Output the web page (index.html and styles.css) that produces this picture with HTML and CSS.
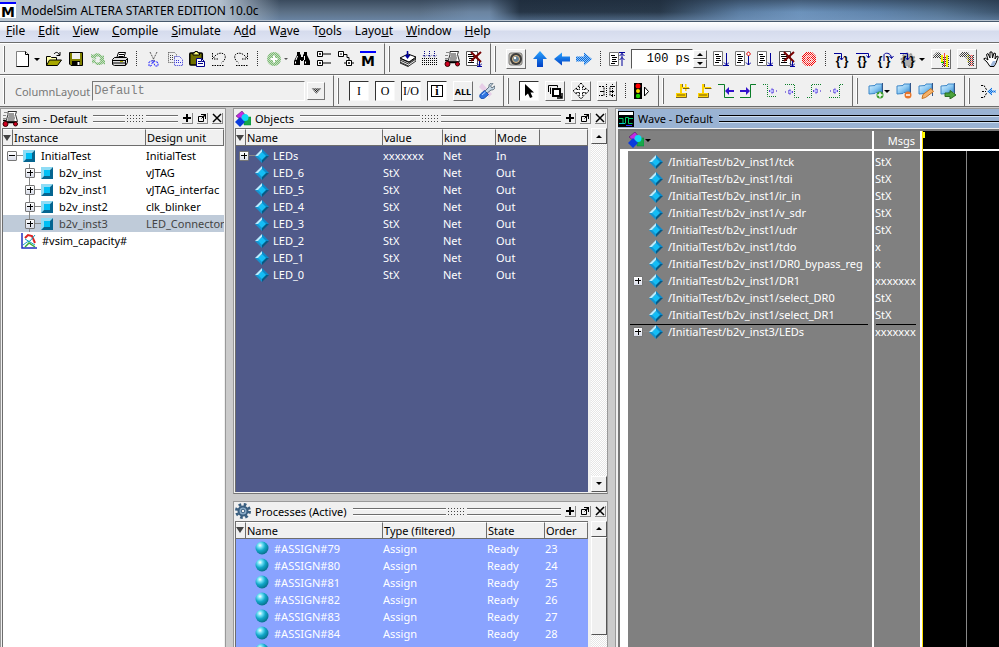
FILE: index.html
```html
<!DOCTYPE html>
<html lang="en">
<head>
<meta charset="utf-8">
<title>ModelSim ALTERA STARTER EDITION 10.0c</title>
<link rel="stylesheet" href="styles.css">
</head>
<body>
<svg class="sprite" aria-hidden="true">
<defs>
<pattern id="dither" width="2" height="2" patternUnits="userSpaceOnUse"><path d="M0 0h1v1h-1zM1 1h1v1h-1z" fill="#000"/></pattern>
<pattern id="dither-red" width="2" height="2" patternUnits="userSpaceOnUse"><path d="M0 0h1v1h-1zM1 1h1v1h-1z" fill="#f00"/></pattern>
<pattern id="dither-blue" width="2" height="2" patternUnits="userSpaceOnUse"><rect width="2" height="2" fill="#8fc4f4"/><path d="M0 0h1v1h-1zM1 1h1v1h-1z" fill="#0a6be0"/></pattern>
<pattern id="dither-green" width="2" height="2" patternUnits="userSpaceOnUse"><rect width="2" height="2" fill="#c4dfbf"/><path d="M0 0h1v1h-1zM1 1h1v1h-1z" fill="#7ab873"/></pattern>
<linearGradient id="arrow" x1="0" y1="0" x2="0" y2="1"><stop offset="0" stop-color="#29a3ff"/><stop offset="1" stop-color="#003fc4"/></linearGradient>
<linearGradient id="flag" x1="0" y1="0" x2="1" y2="1"><stop offset="0" stop-color="#e2f5ff"/><stop offset=".5" stop-color="#8cc9f3"/><stop offset="1" stop-color="#2f7fc4"/></linearGradient>
<radialGradient id="ball" cx=".35" cy=".3" r=".75"><stop offset="0" stop-color="#fff"/><stop offset=".25" stop-color="#6fe0f5"/><stop offset=".55" stop-color="#12a6c8"/><stop offset="1" stop-color="#066c86"/></radialGradient>
</defs>
<symbol id="new" viewBox="0 0 16 16"><path d="M1.500.5h9l3 3v12h-12z" fill="#fff" stroke="#808080"/><path d="M10.500.5v3h3M13.500 3v12.500h-12" fill="none" stroke="#000"/></symbol>
<symbol id="open" viewBox="0 0 16 16"><path d="M.5 14.500v-9h4l1 1h5v3" fill="#ffffa8" stroke="#000"/><path d="M.5 14.500l3-5.500h12l-4 5.500z" fill="#a8a800" stroke="#000"/><path d="M8 3c2-2.500 4-2 5.500 1M14 1v3.500h-3.500" fill="none" stroke="#000"/></symbol>
<symbol id="save" viewBox="0 0 16 16"><path d="M1.500 1.500h13v13H3l-1.500-1.500z" fill="#808000" stroke="#000"/><path d="M4 2h8v6H4z" fill="#f0f0f0"/><path d="M4 10h8v5H4z" fill="#000"/><path d="M9.500 11h2v3h-2z" fill="#fff"/></symbol>
<symbol id="refresh" viewBox="0 0 16 16"><path d="M1 7V3l2 1c3-3 7-2 9 1l2-1v5H9l1.500-2C9 5 7 5 5.500 6.500L7 8zM15 9v5l-2-1.500c-3 2.500-7 2-9-1L2 12.500V8.500h4L5 10c1.500 2 4 2 5.500.5L9.500 9z" fill="url(#dither-green)"/></symbol>
<symbol id="print" viewBox="0 0 16 16"><path d="M4.500 7.500l2-6h7l-2 6z" fill="#fff" stroke="#000"/><path d="M7 3.500h5M6.500 5.500h5" stroke="#000"/><path d="M.5 8.500l2-2h12l1 1v4l-2 3h-11l-2-1z" fill="#ddd" stroke="#000"/><path d="M1 9.500h12.500l2-2M13.500 9v5M1 12h12" stroke="#000" fill="none"/><path d="M8 10.500h3" stroke="#aa0"/></symbol>
<symbol id="cut" viewBox="0 0 16 16"><path d="M5 1l4.500 9M12 1L7.500 10" stroke="#555" stroke-dasharray="2 1" fill="none"/><path d="M7.500 9.500L4 11v4h2l2-5 2 5h3v-3.500z" stroke="#22f" stroke-dasharray="2 1" fill="none"/></symbol>
<symbol id="copy" viewBox="0 0 16 16"><path d="M1.500 1.500h6l2 2v8h-8zM3 4.500h4M3 6.500h5M3 8.500h4" stroke="#444" stroke-dasharray="1 1" fill="none"/><path d="M7.500 5.500h5l3 3v6h-8zM9 9.500h4M9 11.500h5" stroke="#33c" stroke-dasharray="1 1" fill="#eef"/></symbol>
<symbol id="paste" viewBox="0 0 16 16"><rect x=".8" y="2" width="12.500" height="12" rx="1" fill="#707000" stroke="#000" stroke-width="1.500"/><path d="M4 4V2h1.500L6 .5h2.500L9 2h1.500v2z" fill="#ffff80" stroke="#000"/><path d="M7.500 7.500h5l3 3v5h-8z" fill="#fff" stroke="#00008a"/><path d="M9 10.500h3M9 12.500h5M12.500 8v2.500h3" stroke="#00008a" fill="none"/></symbol>
<symbol id="undo" viewBox="0 0 16 16"><path d="M1.500 2v6h6M2.500 7c3-5 8-6 11-3.500 2 3 0 6-3 8.500M1 14.500h12" fill="none" stroke="#000" stroke-dasharray="1.500 1"/></symbol>
<symbol id="redo" viewBox="0 0 16 16"><path d="M14.500 2v6h-6M13.500 7c-3-5-8-6-11-3.500-2 3 0 6 3 8.500M3 14.500h12" fill="none" stroke="#000" stroke-dasharray="1.500 1"/></symbol>
<symbol id="add" viewBox="0 0 16 16"><circle cx="8" cy="8" r="7" fill="url(#dither-green)"/><path d="M8 4.500v7M4.500 8h7" stroke="#fff" stroke-width="2"/></symbol>
<symbol id="find" viewBox="0 0 16 16"><path d="M3 1h3v2l1 1v2h2V4l1-1V1h3v3l3 6v4h-6V9H9v1H7V9H6v5H0v-4l3-6z" fill="#000"/><path d="M3.500 5L2 9M10.500 5v4M1.500 10.500v2M11.500 10.500v2" stroke="#fff"/></symbol>
<symbol id="tree" viewBox="0 0 16 16"><path d="M1.500.5h5v5h-5zM1.500 9.500h5v5h-5z" fill="#fff" stroke="#000"/><path d="M3 3h2M4 2v2M3 12h2M4 11v2M7 3h8M7 12h8" stroke="#000"/></symbol>
<symbol id="hier" viewBox="0 0 16 16"><path d="M.5.5h5v5h-5zM8.500 9.500h5v5h-5z" fill="#fff" stroke="#000"/><path d="M2 3h2M10 12h2M11 11v2M6 3.500h3v3h2v3M14 12h2M6 12h2.500" stroke="#000" fill="none"/></symbol>
<symbol id="compile" viewBox="0 0 16 16"><path d="M0 7l8-4 8 3-7 5z" fill="#fff" stroke="#000"/><path d="M0 7v5l8 3.500 8-5.500V6M0 9l8.500 4L16 8M1 8l8 3.500 7-4.500M0 11l8.500 4" stroke="#000" stroke-width=".8" fill="none"/><path d="M7.500 0v6" stroke="#009" stroke-width="1.500"/><path d="M4.500 4h6l-3 4z" fill="#009"/></symbol>
<symbol id="compile-all" viewBox="0 0 16 16"><path d="M0 7.500h16M0 9.500h16M0 11.500h16M0 13.500h16" stroke="#000" stroke-dasharray="1 1"/><path d="M1 4l1.500 2L5 4M6 4l1.500 2L10 4M11 4l1.500 2L15 4M2.500 0v6M7.500 0v6M12.500 0v6" stroke="#118" stroke-dasharray="1 1" fill="none"/></symbol>
<symbol id="sim" viewBox="0 0 16 16"><path d="M6 .5h8.500l-1 3 2 7H4l2-7zM7 3h5M6.500 5h6M6 7h7M5.500 9h7" fill="#fff" stroke="#000" stroke-width=".8"/><path d="M2 1.500h3M1 4.500h3M1 7.500h3" stroke="#888"/><path d="M1 9.500h2l2 2h9" stroke="#000" fill="none" stroke-width="1.500"/><circle cx="3.500" cy="13" r="2.500" fill="#d00020" stroke="#300"/><circle cx="13.500" cy="13" r="2" fill="#d00020" stroke="#300"/></symbol>
<symbol id="break" viewBox="0 0 16 16"><path d="M.5.500h11v14h-11z" fill="#fff" stroke="#555"/><path d="M2 3.500h4M2 5.500h6M3 7.500h6M3 9.500h5M2 11.500h6" stroke="#000"/><path d="M5 1l10 10M15 1L5 10" stroke="#700" stroke-width="2"/><path d="M13.500 10v5M11 12.500l2.500 2.500 2.500-2.500M11 15.500h5" stroke="#009" fill="none"/></symbol>
<symbol id="camera" viewBox="0 0 16 16"><rect x="1" y="2" width="13" height="12" rx="2" fill="#c9c4b8" stroke="#777"/><circle cx="8" cy="8" r="6" fill="#3c3c3c"/><circle cx="8" cy="8" r="3.500" fill="#5f7f98" stroke="#e0b880"/><circle cx="7" cy="7" r="1.200" fill="#fff"/></symbol>
<symbol id="up" viewBox="0 0 16 16"><path d="M8 0l7 8h-4v8H5V8H1z" fill="url(#arrow)"/></symbol>
<symbol id="left" viewBox="0 0 16 16"><path d="M0 8l8-6.500v4h8v5H8v4z" fill="url(#arrow)"/></symbol>
<symbol id="right" viewBox="0 0 16 16"><path d="M16 8L8 1.500v4H0v5h8v4z" fill="url(#dither-blue)"/></symbol>
<symbol id="restart" viewBox="0 0 16 16"><path d="M.5 1.500h9v13h-9z" fill="#fff" stroke="#777"/><path d="M2 4.500h4M3 6.500h5M3 8.500h4M3 10.500h5M2 12.500h4" stroke="#000"/><path d="M10 1.500h6M13 2v13M10.500 5L13 2.500 15.500 5M10.500 9L13 6.500 15.500 9" stroke="#009" fill="none"/></symbol>
<symbol id="run" viewBox="0 0 16 16"><path d="M.5.500h9v14h-9z" fill="#fff" stroke="#777"/><path d="M2 3.500h4M3 5.500h5M3 7.500h4M3 9.500h5M2 11.500h4" stroke="#000"/><path d="M13.500 2v12M11 11.500l2.500 2.500 2.500-2.500M10 14.500h6" stroke="#009" fill="none"/></symbol>
<symbol id="run-cont" viewBox="0 0 16 16"><path d="M.5.500h9v14h-9z" fill="#fff" stroke="#777"/><path d="M2 3.500h4M3 5.500h5M3 7.500h4M3 9.500h5M2 11.500h4" stroke="#000"/><path d="M13.500 5v9M11 11.500l2.500 2.500 2.500-2.500" stroke="#009" fill="none"/><path d="M13.500.7L15.500 3l-2 2-2-2z" fill="#fff" stroke="#d00"/></symbol>
<symbol id="stop" viewBox="0 0 16 16"><path d="M5 1h6l4 4v6l-4 4H5l-4-4V5z" fill="url(#dither-red)"/><path d="M11 5H5v6h6V8H8" fill="none" stroke="#fff" opacity=".7"/></symbol>
<symbol id="step-in" viewBox="0 0 16 16"><path d="M0 2.500h7.500v6M5.500 6.500l2 2.500 2-2.500" stroke="#009" fill="none"/></symbol>
<symbol id="step-over" viewBox="0 0 16 16"><path d="M0 2.500h12.500v4M10.500 4.500l2 2.500 2-2.500" stroke="#009" fill="none"/></symbol>
<symbol id="step-out" viewBox="0 0 16 16"><path d="M6 10V4c0-2.500 7-3 7.500 3M11.500 5l2 2.500 2-2.500" stroke="#009" fill="none"/></symbol>
<symbol id="profile" viewBox="0 0 16 16"><path d="M0 5l4-4 4 1v3h8v11h-7V9L6 7H0z" fill="url(#dither)" opacity=".75"/><path d="M9 4v8M14 4v12" stroke="#ee0" stroke-width="2"/><path d="M11.500 2v13" stroke="#f44"/><path d="M8 11.500h3" stroke="#0c0"/></symbol>
<symbol id="mem" viewBox="0 0 16 16"><path d="M0 5l3-4h6l2 3h4v11H9V9L6 6H0z" fill="url(#dither)" opacity=".75"/><path d="M9 4v8" stroke="#dd0" stroke-dasharray="1 1"/><path d="M12.500 4v11" stroke="#f55" stroke-width="2" stroke-dasharray="1 1"/></symbol>
<symbol id="hand" viewBox="0 0 16 16"><path d="M4 11L.7 8l1.500-1L5 9 3.500 3.500 5 2.500 7 7V1h2l.5 6L11 2l1.500.5L12 8l2-3 1.300.7L13 12l-2 3.500H7z" fill="#fff" stroke="#000"/><path d="M10 10h3l-2 5H7z" fill="#9fb8dc"/></symbol>
<symbol id="wrench" viewBox="0 0 16 16"><path d="M3 0l10 11-3 3L0 4z" fill="#e3bfe3" opacity=".7"/><path d="M5 9l5-5c-.5-3 2-4.500 4-3.500L11.500 3 13 5l2.500-2c1 3-1 4-3.500 4l-5 4z" fill="#c5d8e5" stroke="#456" stroke-width=".8"/><path d="M5.500 7.500l4 4-4 3.500c-3.500 2-6-1-4-4z" fill="#2f73e0" stroke="#1850b0"/><path d="M3 12l3.500-3" stroke="#bfe0ff"/></symbol>
<symbol id="cursor" viewBox="0 0 16 16"><path d="M4 1v12l3-2.500L9 15l2.500-1-2-4.500H13z" fill="#000"/></symbol>
<symbol id="zoom-area" viewBox="0 0 16 16"><path d="M1.500 9V2.500h9v2M3.500 11V4.500" stroke="#000" fill="none"/><path d="M6 6h7v7H6z" fill="#fff" stroke="#000" stroke-width="2"/><path d="M15 10v5h-5M12 12l3 3" stroke="#000" fill="none" stroke-width="1.500"/></symbol>
<symbol id="pan" viewBox="0 0 16 16"><path d="M8 0l3 3.500H9.500v3h3V5L16 8l-3.500 3V9.500h-3v3H11L8 16l-3-3.500h1.500v-3h-3V11L0 8l3.500-3v1.500h3v-3H5z" fill="#fff" stroke="#000" stroke-dasharray="1.500 .6"/></symbol>
<symbol id="edit-wave" viewBox="0 0 16 16"><path d="M0 3.500h5v9H0M16 3.500h-5v9h5" stroke="#000" fill="none" stroke-dasharray="2 1"/><path d="M7.500 1v14M13.500 1v14" stroke="#000" stroke-dasharray="1 1"/><path d="M1 8.500h4M11 8.500h4" stroke="#000"/></symbol>
<symbol id="traffic" viewBox="0 0 16 16"><path d="M0 0h8v16H0z" fill="#000"/><circle cx="4" cy="3" r="2.500" fill="#f00"/><circle cx="4" cy="8" r="2" fill="#ffd800"/><circle cx="4" cy="13" r="2.200" fill="#1ed000"/><path d="M10.500 4v9l4-4.500z" fill="#fff" stroke="#000"/></symbol>
<symbol id="ins-cursor" viewBox="0 0 16 16"><path d="M6 1h2v9h4v4H2v-4h4zM8 4h7v1.500H8zM11 1h1.500v7H11z" fill="#ffd400"/><path d="M2 14.500h10.500V10M3 12h8M8.500 1v3M9 5.500h6.500" fill="none" stroke="#554000" stroke-width=".8"/></symbol>
<symbol id="del-cursor" viewBox="0 0 16 16"><path d="M6 1h2v9h4v4H2v-4h4zM8 4h7v1.500H8z" fill="#ffd400"/><path d="M2 14.500h10.500V10M3 12h8M8.500 1v3M9 5.500h6.500" fill="none" stroke="#554000" stroke-width=".8"/></symbol>
<symbol id="prev-edge" viewBox="0 0 16 16"><path d="M0 1.500h6.500v13H16" stroke="#0a7d28" fill="none"/><path d="M7 8l4-4v3h5v2h-5v3z" fill="#31c"/></symbol>
<symbol id="next-edge" viewBox="0 0 16 16"><path d="M16 1.500h-5.500v13H0" stroke="#0a7d28" fill="none"/><path d="M10 8L6 4v3H0v2h6v3z" fill="#31c"/></symbol>
<symbol id="edge1" viewBox="0 0 16 16"><path d="M1 1.500h4.500v12H15" stroke="#0a7d28" stroke-dasharray="1 1" fill="none"/><path d="M7 8l4-3v6zM11 8h4" fill="#bbf" stroke="#31c" stroke-dasharray="1 2"/></symbol>
<symbol id="edge2" viewBox="0 0 16 16"><path d="M1 1.500h9.500v13H15" stroke="#0a7d28" stroke-dasharray="1 1" fill="none"/><path d="M9 9L5 6v6zM1 9h4" fill="#bbf" stroke="#31c" stroke-dasharray="1 2"/></symbol>
<symbol id="edge3" viewBox="0 0 16 16"><path d="M15 1.500H5.500v13H1" stroke="#0a7d28" stroke-dasharray="1 1" fill="none"/><path d="M7 8l4-3v6zM11 8h4" fill="#bbf" stroke="#31c" stroke-dasharray="1 2"/></symbol>
<symbol id="edge4" viewBox="0 0 16 16"><path d="M15 1.500h-3.500v13H1" stroke="#0a7d28" stroke-dasharray="1 1" fill="none"/><path d="M10 8L6 5v6zM2 8h4" fill="#bbf" stroke="#31c" stroke-dasharray="1 2"/></symbol>
<symbol id="flag-base" viewBox="0 0 16 16"><path d="M1 3l6-.5 1-1.500h6v8l-6 .5-1 1-6 .5z" fill="url(#flag)" stroke="#3a86c8"/><path d="M14.500 0v13" stroke="#358"/></symbol>
<symbol id="bm-add" viewBox="0 0 16 16"><use href="#flag-base"/><circle cx="12" cy="12" r="3.500" fill="#3a9c2a"/><path d="M12 9.500v5M9.500 12h5" stroke="#fff" stroke-width="1.500"/></symbol>
<symbol id="bm-del" viewBox="0 0 16 16"><use href="#flag-base"/><circle cx="12" cy="12" r="3.500" fill="#e8762c"/><path d="M10 12h4" stroke="#fff" stroke-width="1.500"/></symbol>
<symbol id="bm-edit" viewBox="0 0 16 16"><use href="#flag-base"/><path d="M4 15.500l1-4 8-6 2.500 3-8 6z" fill="#f5b26a" stroke="#c87420"/></symbol>
<symbol id="bm-go" viewBox="0 0 16 16"><use href="#flag-base"/><path d="M5 10h5V7.500l6 4.500-6 4v-2.500H5z" fill="#4ba33c" stroke="#2d6f22"/></symbol>
<symbol id="merge" viewBox="0 0 16 16"><path d="M1 2.500h3l3 5M1 14.500h3l3-5M2 8.500h4" stroke="#000" stroke-dasharray="2 1" fill="none"/><path d="M7 8.500l5-4v3h4v2h-4v3z" fill="url(#dither-blue)"/></symbol>
<symbol id="plus" viewBox="0 0 10 10"><path d="M5 1v8M1 5h8" stroke="#000" stroke-width="2"/></symbol>
<symbol id="undock" viewBox="0 0 10 10"><path d="M1.500 3.500h5v5h-5zM4 1.500h4.500V6M4.500 5.500L8 2" stroke="#000" fill="none"/><path d="M5 1h4v4z"/></symbol>
<symbol id="close" viewBox="0 0 10 10"><path d="M1 1l8 8M9 1L1 9" stroke="#000" stroke-width="1.500"/></symbol>
<symbol id="block" viewBox="0 0 12 12"><path d="M0 0h12L9 3v6H3v0L0 12z" fill="#8fdcf5"/><path d="M12 0v12H0l3-3h6V3z" fill="#056590"/><path d="M3 3h6v6H3z" fill="#00bff5"/></symbol>
<symbol id="diamond" viewBox="0 0 14 14"><path d="M7 0L0 7l3 .5L7 3z" fill="#b8ecff"/><path d="M7 0l7 7-4 .5L7 3z" fill="#0a8acb"/><path d="M0 7l7 7v-4L3.500 7z" fill="#1594d0"/><path d="M14 7l-7 7v-4l3.500-3z" fill="#065a85"/><path d="M7 3l4 4-4 4-4-4z" fill="#14bdf5"/></symbol>
<symbol id="sphere" viewBox="0 0 14 14"><circle cx="7" cy="7" r="6.500" fill="url(#ball)"/></symbol>
<symbol id="shapes" viewBox="0 0 16 16"><path d="M1 5l6-5 4 5-5 4z" fill="#c32be0" stroke="#3c0a50" stroke-width=".5"/><path d="M9 6h7v8H9z" fill="#17a84a" stroke="#083" stroke-width=".5"/><circle cx="10" cy="6.500" r="3.500" fill="#10d8f5"/><path d="M0 11l5-5 5 5-5 5z" fill="#0a3cdc"/></symbol>
<symbol id="gear" viewBox="0 0 16 16"><circle cx="8" cy="8" r="6.500" fill="none" stroke="#3a5f80" stroke-width="3" stroke-dasharray="2.600 2.500"/><circle cx="8" cy="8" r="4.500" fill="#8fb0cc" stroke="#3a5f80" stroke-width="2"/><circle cx="8" cy="8" r="1.800" fill="#f0f0f0" stroke="#3a5f80"/></symbol>
<symbol id="capacity" viewBox="0 0 16 16"><path d="M1 0v15h15" stroke="#2030c0" stroke-width="1.500" fill="none"/><path d="M4 5l3-3 4 1 3 7" stroke="#d22" stroke-width="2" fill="none"/><path d="M2 12l4-3 3-1 5-6M4 6l10 6" stroke="#14a0c0" fill="none"/><path d="M4 14l4-4 6 4" stroke="#3aaa3a" stroke-width="1.500" fill="none"/></symbol>
<symbol id="wave" viewBox="0 0 16 16"><path d="M0 0h16v16H0z" fill="#000"/><path d="M1 1h14v3H1z" fill="#fff"/><path d="M1 7.500h4v5M7.500 12.500v-6h3v6h4M11 7.500h4" stroke="#0c6" fill="none"/><path d="M1 12.500h6" stroke="#0cc"/><path d="M8 14.500h6" stroke="#33f"/></symbol>
</svg>

<div class="app">
<header class="titlebar"><span class="logo">M</span><h1>ModelSim ALTERA STARTER EDITION 10.0c</h1></header>
<nav class="menubar">
<button><u>F</u>ile</button><button><u>E</u>dit</button><button><u>V</u>iew</button><button><u>C</u>ompile</button><button><u>S</u>imulate</button><button>A<u>d</u>d</button><button>W<u>a</u>ve</button><button>T<u>o</u>ols</button><button>Layo<u>u</u>t</button><button><u>W</u>indow</button><button><u>H</u>elp</button>
</nav>

<div class="toolrow first">
<div class="group">
<button class="tb drop wide" aria-label="New"><svg class="i16"><use href="#new"/></svg></button>
<button class="tb" aria-label="Open"><svg class="i16"><use href="#open"/></svg></button>
<button class="tb" aria-label="Save"><svg class="i16"><use href="#save"/></svg></button>
<button class="tb" aria-label="Reload"><svg class="i16"><use href="#refresh"/></svg></button>
<button class="tb" aria-label="Print"><svg class="i16"><use href="#print"/></svg></button>
<span class="sep"></span>
<button class="tb" aria-label="Cut"><svg class="i16"><use href="#cut"/></svg></button>
<button class="tb" aria-label="Copy"><svg class="i16"><use href="#copy"/></svg></button>
<button class="tb" aria-label="Paste"><svg class="i16"><use href="#paste"/></svg></button>
<button class="tb" aria-label="Undo"><svg class="i16"><use href="#undo"/></svg></button>
<button class="tb" aria-label="Redo"><svg class="i16"><use href="#redo"/></svg></button>
<span class="sep"></span>
<button class="tb drop faint" aria-label="Add selected"><svg class="i16"><use href="#add"/></svg></button>
<button class="tb" aria-label="Find"><svg class="i16"><use href="#find"/></svg></button>
<button class="tb" aria-label="Collapse all"><svg class="i16"><use href="#tree"/></svg></button>
<button class="tb" aria-label="Expand hierarchy"><svg class="i16"><use href="#hier"/></svg></button>
<button class="tb" aria-label="ModelSim"><span class="logo">M</span></button>
</div>
<div class="group">
<button class="tb" aria-label="Compile"><svg class="i16"><use href="#compile"/></svg></button>
<button class="tb" aria-label="Compile all"><svg class="i16"><use href="#compile-all"/></svg></button>
<button class="tb" aria-label="Simulate"><svg class="i16"><use href="#sim"/></svg></button>
<button class="tb" aria-label="Break"><svg class="i16"><use href="#break"/></svg></button>
</div>
<div class="group last">
<button class="tb raised" aria-label="Snapshot"><svg class="i16"><use href="#camera"/></svg></button>
<button class="tb" aria-label="Up"><svg class="i16"><use href="#up"/></svg></button>
<button class="tb" aria-label="Back"><svg class="i16"><use href="#left"/></svg></button>
<button class="tb" aria-label="Forward"><svg class="i16"><use href="#right"/></svg></button>
<span class="sep"></span>
<button class="tb" aria-label="Restart"><svg class="i16"><use href="#restart"/></svg></button>
<div class="spin"><input type="text" value="100 ps" aria-label="Run length"><div class="spin-btns"><button class="su" aria-label="Increase"></button><button class="sd" aria-label="Decrease"></button></div></div>
<button class="tb" aria-label="Run"><svg class="i16"><use href="#run"/></svg></button>
<button class="tb" aria-label="Continue run"><svg class="i16"><use href="#run-cont"/></svg></button>
<button class="tb" aria-label="Run all"><svg class="i16"><use href="#run"/></svg></button>
<button class="tb" aria-label="Break run"><svg class="i16"><use href="#break"/></svg></button>
<button class="tb" aria-label="Stop"><svg class="i16"><use href="#stop"/></svg></button>
<span class="sep"></span>
<button class="tb" aria-label="Step into"><svg class="i16"><text x="8" y="14" class="brace">{ }</text><use href="#step-in"/></svg></button>
<button class="tb" aria-label="Step over"><svg class="i16"><text x="6" y="14" class="brace">{}</text><use href="#step-over"/></svg></button>
<button class="tb" aria-label="Step out"><svg class="i16"><text x="6" y="14" class="brace">{ }</text><use href="#step-out"/></svg></button>
<button class="tb drop wide" aria-label="Step options"><svg class="i16"><circle cx="8" cy="9" r="6.500" fill="#b0b0b0" stroke="#999" stroke-width="2" stroke-dasharray="2 2"/><text x="8" y="14" class="brace">{ }</text><use href="#step-in"/></svg></button>
<button class="tb raised" aria-label="Performance profiling"><svg class="i16"><use href="#profile"/></svg></button>
<button class="tb raised" aria-label="Memory profiling"><svg class="i16"><use href="#mem"/></svg></button>
<button class="tb" aria-label="Edit breakpoints"><svg class="i16"><use href="#hand"/></svg></button>
</div>
</div>

<div class="toolrow">
<div class="group">
<div class="combo"><label for="columns">ColumnLayout</label><select id="columns" disabled><option>Default</option></select><svg class="combo-arrow" viewBox="0 0 18 18" aria-hidden="true"><path d="M4 6h11l-5.500 6z" fill="url(#dither)"/></svg></div>
</div>
<div class="group">
<button class="tb pressed serif">I</button>
<button class="tb pressed serif">O</button>
<button class="tb pressed serif">I/O</button>
<button class="tb pressed serif"><span class="boxed">i</span></button>
<button class="tb raised all">ALL</button>
<button class="tb" aria-label="Configure"><svg class="i16"><use href="#wrench"/></svg></button>
</div>
<div class="group">
<button class="tb pressed" aria-label="Select mode"><svg class="i16"><use href="#cursor"/></svg></button>
<button class="tb raised" aria-label="Zoom mode"><svg class="i16"><use href="#zoom-area"/></svg></button>
<button class="tb raised" aria-label="Pan mode"><svg class="i16"><use href="#pan"/></svg></button>
<button class="tb raised" aria-label="Edit mode"><svg class="i16"><use href="#edit-wave"/></svg></button>
<span class="sep"></span>
<button class="tb" aria-label="Stop drawing"><svg class="i16"><use href="#traffic"/></svg></button>
</div>
<div class="group">
<button class="tb" aria-label="Insert cursor"><svg class="i16"><use href="#ins-cursor"/></svg></button>
<button class="tb" aria-label="Delete cursor"><svg class="i16"><use href="#del-cursor"/></svg></button>
<button class="tb" aria-label="Previous transition"><svg class="i16"><use href="#prev-edge"/></svg></button>
<button class="tb" aria-label="Next transition"><svg class="i16"><use href="#next-edge"/></svg></button>
<button class="tb" aria-label="Previous falling edge"><svg class="i16"><use href="#edge1"/></svg></button>
<button class="tb" aria-label="Next falling edge"><svg class="i16"><use href="#edge2"/></svg></button>
<button class="tb" aria-label="Previous rising edge"><svg class="i16"><use href="#edge3"/></svg></button>
<button class="tb" aria-label="Next rising edge"><svg class="i16"><use href="#edge4"/></svg></button>
</div>
<div class="group">
<button class="tb drop" aria-label="Add bookmark"><svg class="i16"><use href="#bm-add"/></svg></button>
<button class="tb" aria-label="Delete bookmark"><svg class="i16"><use href="#bm-del"/></svg></button>
<button class="tb" aria-label="Edit bookmark"><svg class="i16"><use href="#bm-edit"/></svg></button>
<button class="tb" aria-label="Go to bookmark"><svg class="i16"><use href="#bm-go"/></svg></button>
</div>
<div class="group last">
<button class="tb" aria-label="Merge"><svg class="i16"><use href="#merge"/></svg></button>
</div>
</div>

<main class="workspace">
<section class="pane sim">
<header class="pane-head"><svg class="i16"><use href="#sim"/></svg><h2>sim - Default</h2><span class="rule"></span><span class="dots"></span><span class="rule"></span>
<button class="pb" aria-label="Zoom pane"><svg><use href="#plus"/></svg></button><button class="pb" aria-label="Undock"><svg><use href="#undock"/></svg></button><button class="pb" aria-label="Close"><svg><use href="#close"/></svg></button></header>
<div class="list white">
<table>
<colgroup><col class="c-arrow"><col class="c-instance"><col></colgroup>
<thead><tr><th class="sort"></th><th>Instance</th><th>Design unit</th></tr></thead>
<tbody>
<tr><td colspan="2"><div class="node root"><button class="tog minus" aria-label="Collapse"></button><i class="link"></i><svg class="i12"><use href="#block"/></svg><span>InitialTest</span></div></td><td>InitialTest</td></tr>
<tr><td colspan="2"><div class="node child"><button class="tog" aria-label="Expand"></button><i class="link"></i><svg class="i12"><use href="#block"/></svg><span>b2v_inst</span></div></td><td>vJTAG</td></tr>
<tr><td colspan="2"><div class="node child"><button class="tog" aria-label="Expand"></button><i class="link"></i><svg class="i12"><use href="#block"/></svg><span>b2v_inst1</span></div></td><td>vJTAG_interfac</td></tr>
<tr><td colspan="2"><div class="node child"><button class="tog" aria-label="Expand"></button><i class="link"></i><svg class="i12"><use href="#block"/></svg><span>b2v_inst2</span></div></td><td>clk_blinker</td></tr>
<tr class="selected"><td colspan="2"><div class="node child"><button class="tog" aria-label="Expand"></button><i class="link"></i><svg class="i12"><use href="#block"/></svg><span>b2v_inst3</span></div></td><td>LED_Connector</td></tr>
<tr><td colspan="2"><div class="node leaf"><svg class="i16"><use href="#capacity"/></svg><span>#vsim_capacity#</span></div></td><td></td></tr>
</tbody>
</table>
</div>
</section>

<div class="middle">
<section class="pane objects">
<header class="pane-head"><svg class="i16"><use href="#shapes"/></svg><h2>Objects</h2><span class="rule"></span><span class="dots"></span><span class="rule"></span>
<button class="pb" aria-label="Zoom pane"><svg><use href="#plus"/></svg></button><button class="pb" aria-label="Undock"><svg><use href="#undock"/></svg></button><button class="pb" aria-label="Close"><svg><use href="#close"/></svg></button></header>
<div class="scroller">
<div class="list navy">
<table>
<colgroup><col class="c-arrow"><col class="c-name"><col class="c-value"><col class="c-kind"><col class="c-mode"><col></colgroup>
<thead><tr><th class="sort"></th><th>Name</th><th>value</th><th>kind</th><th>Mode</th><th></th></tr></thead>
<tbody>
<tr><td colspan="2"><div class="node obj"><button class="tog" aria-label="Expand"></button><i class="link"></i><svg class="i14"><use href="#diamond"/></svg><span>LEDs</span></div></td><td>xxxxxxx</td><td>Net</td><td>In</td><td></td></tr>
<tr><td colspan="2"><div class="node sig"><svg class="i14"><use href="#diamond"/></svg><span>LED_6</span></div></td><td>StX</td><td>Net</td><td>Out</td><td></td></tr>
<tr><td colspan="2"><div class="node sig"><svg class="i14"><use href="#diamond"/></svg><span>LED_5</span></div></td><td>StX</td><td>Net</td><td>Out</td><td></td></tr>
<tr><td colspan="2"><div class="node sig"><svg class="i14"><use href="#diamond"/></svg><span>LED_4</span></div></td><td>StX</td><td>Net</td><td>Out</td><td></td></tr>
<tr><td colspan="2"><div class="node sig"><svg class="i14"><use href="#diamond"/></svg><span>LED_3</span></div></td><td>StX</td><td>Net</td><td>Out</td><td></td></tr>
<tr><td colspan="2"><div class="node sig"><svg class="i14"><use href="#diamond"/></svg><span>LED_2</span></div></td><td>StX</td><td>Net</td><td>Out</td><td></td></tr>
<tr><td colspan="2"><div class="node sig"><svg class="i14"><use href="#diamond"/></svg><span>LED_1</span></div></td><td>StX</td><td>Net</td><td>Out</td><td></td></tr>
<tr><td colspan="2"><div class="node sig"><svg class="i14"><use href="#diamond"/></svg><span>LED_0</span></div></td><td>StX</td><td>Net</td><td>Out</td><td></td></tr>
</tbody>
</table>
</div>
<div class="scrollbar"><button class="su" aria-label="Scroll up"></button><span class="track"></span><button class="sd" aria-label="Scroll down"></button></div>
</div>
</section>

<section class="pane processes">
<header class="pane-head"><svg class="i16"><use href="#gear"/></svg><h2>Processes (Active)</h2><span class="rule"></span><span class="dots"></span><span class="rule"></span>
<button class="pb" aria-label="Zoom pane"><svg><use href="#plus"/></svg></button><button class="pb" aria-label="Undock"><svg><use href="#undock"/></svg></button><button class="pb" aria-label="Close"><svg><use href="#close"/></svg></button></header>
<div class="scroller">
<div class="list sky">
<table>
<colgroup><col class="c-arrow"><col class="c-name"><col class="c-type"><col class="c-state"><col></colgroup>
<thead><tr><th class="sort"></th><th>Name</th><th>Type (filtered)</th><th>State</th><th>Order</th></tr></thead>
<tbody>
<tr><td colspan="2"><div class="node proc"><svg class="i14"><use href="#sphere"/></svg><span>#ASSIGN#79</span></div></td><td>Assign</td><td>Ready</td><td>23</td></tr>
<tr><td colspan="2"><div class="node proc"><svg class="i14"><use href="#sphere"/></svg><span>#ASSIGN#80</span></div></td><td>Assign</td><td>Ready</td><td>24</td></tr>
<tr><td colspan="2"><div class="node proc"><svg class="i14"><use href="#sphere"/></svg><span>#ASSIGN#81</span></div></td><td>Assign</td><td>Ready</td><td>25</td></tr>
<tr><td colspan="2"><div class="node proc"><svg class="i14"><use href="#sphere"/></svg><span>#ASSIGN#82</span></div></td><td>Assign</td><td>Ready</td><td>26</td></tr>
<tr><td colspan="2"><div class="node proc"><svg class="i14"><use href="#sphere"/></svg><span>#ASSIGN#83</span></div></td><td>Assign</td><td>Ready</td><td>27</td></tr>
<tr><td colspan="2"><div class="node proc"><svg class="i14"><use href="#sphere"/></svg><span>#ASSIGN#84</span></div></td><td>Assign</td><td>Ready</td><td>28</td></tr>
<tr><td colspan="2"><div class="node proc"><svg class="i14"><use href="#sphere"/></svg></div></td><td></td><td></td><td></td></tr>
</tbody>
</table>
</div>
<div class="scrollbar"><button class="su" aria-label="Scroll up"></button><span class="thumb"></span><span class="track"></span></div>
</div>
</section>
</div>

<section class="pane wave">
<header class="pane-head active"><svg class="i16"><use href="#wave"/></svg><h2>Wave - Default</h2><span class="rule"></span></header>
<div class="wave-body">
<table class="signals">
<colgroup><col><col class="c-msgs"></colgroup>
<thead><tr><th><button class="tb drop wide" aria-label="Objects"><svg class="i16"><use href="#shapes"/></svg></button></th><th class="msgs">Msgs</th></tr></thead>
<tbody>
<tr class="lead"><td></td><td></td></tr>
<tr><td><div class="node wsig"><svg class="i14"><use href="#diamond"/></svg><span>/InitialTest/b2v_inst1/tck</span></div></td><td>StX</td></tr>
<tr><td><div class="node wsig"><svg class="i14"><use href="#diamond"/></svg><span>/InitialTest/b2v_inst1/tdi</span></div></td><td>StX</td></tr>
<tr><td><div class="node wsig"><svg class="i14"><use href="#diamond"/></svg><span>/InitialTest/b2v_inst1/ir_in</span></div></td><td>StX</td></tr>
<tr><td><div class="node wsig"><svg class="i14"><use href="#diamond"/></svg><span>/InitialTest/b2v_inst1/v_sdr</span></div></td><td>StX</td></tr>
<tr><td><div class="node wsig"><svg class="i14"><use href="#diamond"/></svg><span>/InitialTest/b2v_inst1/udr</span></div></td><td>StX</td></tr>
<tr><td><div class="node wsig"><svg class="i14"><use href="#diamond"/></svg><span>/InitialTest/b2v_inst1/tdo</span></div></td><td>x</td></tr>
<tr><td><div class="node wsig"><svg class="i14"><use href="#diamond"/></svg><span>/InitialTest/b2v_inst1/DR0_bypass_reg</span></div></td><td>x</td></tr>
<tr><td><div class="node wbus"><button class="tog" aria-label="Expand"></button><i class="link"></i><svg class="i14"><use href="#diamond"/></svg><span>/InitialTest/b2v_inst1/DR1</span></div></td><td>xxxxxxx</td></tr>
<tr><td><div class="node wsig"><svg class="i14"><use href="#diamond"/></svg><span>/InitialTest/b2v_inst1/select_DR0</span></div></td><td>StX</td></tr>
<tr><td><div class="node wsig"><svg class="i14"><use href="#diamond"/></svg><span>/InitialTest/b2v_inst1/select_DR1</span></div></td><td>StX</td></tr>
<tr class="mark"><td><div class="node wbus"><button class="tog" aria-label="Expand"></button><i class="link"></i><svg class="i14"><use href="#diamond"/></svg><span>/InitialTest/b2v_inst3/LEDs</span></div></td><td>xxxxxxx</td></tr>
<tr class="fill"><td></td><td></td></tr>
</tbody>
</table>
<div class="scope"><div class="scope-top"></div><div class="scope-main"></div></div>
</div>
</section>
</main>
</div>
</body>
</html>
```
FILE: styles.css
```css
*, *::before, *::after { box-sizing: border-box; }
html, body { margin: 0; height: 100%; }
body {
  overflow: hidden;
  background: #f0f0f0;
  color: #000;
  font: 11px/17px "Noto Sans", "Open Sans", sans-serif;
}
button { font: inherit; color: inherit; margin: 0; padding: 0; border: 0; background: none; }
h1, h2 { margin: 0; font-size: inherit; font-weight: normal; white-space: nowrap; }
.sprite { position: absolute; width: 0; height: 0; }
svg { display: block; flex: none; overflow: visible; }
.i16 { width: 16px; height: 16px; }
.i14 { width: 14px; height: 14px; }
.i12 { width: 12px; height: 12px; }
.logo {
  display: flex;
  align-items: flex-end;
  justify-content: center;
  width: 16px;
  height: 16px;
  flex: none;
  border-top: 2px solid #00f;
  color: #000;
  font: bold 14px/12px "DejaVu Sans", sans-serif;
}
.titlebar .logo { background: #fff; }
.brace { font: bold 12px "Liberation Sans", sans-serif; text-anchor: middle; }

.app { display: flex; flex-direction: column; height: 100vh; }

/* Title and menu */
.titlebar {
  display: flex;
  align-items: center;
  gap: 5px;
  height: 21px;
  flex: none;
  font-size: 12px;
  border-bottom: 1px solid #b9c4d0;
  background:
    linear-gradient(90deg, #b9c5d2 0, #b3c0ce 22%, rgba(150, 166, 184, 0) 28%),
    linear-gradient(180deg, rgba(25, 38, 54, .5) 0, transparent 60%, rgba(120, 155, 195, .45) 100%),
    linear-gradient(90deg, #5c7086 0, #5c7086 42%, #6b84a0 47%, #6b84a0 49%, #263546 52%, #283849 66%, #5b7da2 74%, #6c92bb 80%, #5f83aa 88%, #557493 94%, #3d556e 100%);
}
.menubar {
  display: flex;
  align-items: flex-start;
  height: 21px;
  flex: none;
  gap: 13px;
  padding: 0 6px;
  border-top: 1px solid #47586c;
  background: linear-gradient(#fff 0, #e9ecf6 40%, #d5dbed 45%, #dfe4f3 100%);
  font-size: 12px;
  line-height: 18px;
}

/* Toolbars */
.toolrow { display: flex; flex: none; height: 32px; border-bottom: 1px solid #6d6d6d; overflow: hidden; }
.toolrow.first { height: 33px; border-top: 1px solid #6d6d6d; }
.group {
  display: flex;
  align-items: center;
  gap: 6px;
  flex: none;
  padding-right: 8px;
  border-right: 1px solid #6d6d6d;
  border-top: 1px solid #fff;
}
.group::before {
  content: "";
  align-self: stretch;
  width: 2px;
  margin: 2px 4px 2px 3px;
  border-left: 1px solid #fff;
  border-right: 1px solid #6d6d6d;
}
.group.last { flex: 1; border-right: 0; padding: 0; }
.tb { display: flex; align-items: center; flex: none; }
.drop::after {
  content: "";
  border: 3px solid transparent;
  border-top-color: #000;
  border-bottom: 0;
}
.drop { width: 22px; }
.drop.wide { width: 25px; gap: 3px; }
.drop.faint::after { border-width: 2px; border-bottom: 0; margin-left: 2px; border-top-color: #555; }
.raised, .pressed { width: 20px; height: 20px; justify-content: center; }
.raised { border: 1px solid; border-color: #fff #6d6d6d #6d6d6d #fff; }
.pressed { background: #fff; border: 1px solid; border-color: #333 #f8f8f8 #f8f8f8 #333; }
.serif { font: 12px "Liberation Serif", serif; }
.all { font: bold 9px "Open Sans", sans-serif; }
.boxed { border: 1px solid #000; width: 12px; height: 12px; line-height: 10px; font-weight: bold; text-align: center; }
.sep { width: 5px; height: 16px; background: repeating-linear-gradient(#333 0 1px, transparent 1px 2px) 2px 0 / 1px 100% no-repeat; }

.spin { display: flex; align-items: center; }
.spin input {
  width: 62px;
  height: 20px;
  padding: 0 2px;
  border: 1px solid;
  border-color: #555 #fff #fff #555;
  background: #fff;
  text-align: right;
  font: 12px "Liberation Mono", monospace;
}
.spin-btns { width: 14px; }
.su, .sd {
  display: flex;
  align-items: center;
  justify-content: center;
  border: 1px solid;
  border-color: #fff #555 #555 #fff;
  background: #f0f0f0;
}
.su::after, .sd::after { content: ""; border: 3px solid transparent; }
.su::after { border-bottom-color: #000; border-top: 0; }
.sd::after { border-top-color: #000; border-bottom: 0; }
.spin-btns button { width: 14px; height: 9px; }

.combo { display: flex; align-items: center; gap: 2px; width: 310px; }
.combo label { color: #777; flex: none; }
.combo select {
  appearance: none;
  flex: 1;
  min-width: 0;
  height: 20px;
  padding: 0 1px;
  border: 1px solid;
  border-color: #777 #fff #fff #777;
  border-radius: 0;
  background: #f0f0f0;
  color: #808080;
  opacity: 1;
  font: 12px "Liberation Mono", monospace;
}
.combo-arrow { width: 18px; height: 18px; border: 1px solid; border-color: #fff #777 #777 #fff; }

/* Panes */
.workspace {
  flex: 1;
  min-height: 0;
  display: grid;
  grid-template-columns: 226fr 375fr 384fr;
  grid-template-rows: minmax(0, 1fr);
  gap: 7px;
  padding-top: 1px;
  background: #cbcbcb;
}
.middle { display: flex; flex-direction: column; gap: 7px; min-width: 0; min-height: 0; }
.pane {
  display: flex;
  flex-direction: column;
  min-width: 0;
  min-height: 0;
  border: 1px solid #999;
  border-bottom-color: #fff;
  background: #f0f0f0;
}
.sim { padding: 0 1px; border-bottom: 0; }
.objects { flex: 385; padding: 0 0 1px 1px; border-bottom-color: #777; }
.processes { flex: 146; padding-left: 1px; border-bottom: 0; }
.pane-head { display: flex; align-items: center; height: 19px; flex: none; gap: 4px; }
.pane-head h2 { margin-right: 2px; }
.rule {
  flex: 1;
  height: 7px;
  border: 1px solid #6d6d6d;
  border-left: 0;
  border-right: 0;
  box-shadow: inset 0 1px #fff, 0 1px #fff;
}
.dots {
  width: 17px;
  height: 7px;
  margin: 0 -2px;
  background: repeating-linear-gradient(90deg, #444 0 1px, #f0f0f0 1px 3px);
  mask: repeating-linear-gradient(#000 0 1px, transparent 1px 3px);
}
.pb { width: 11px; height: 11px; border-right: 1px solid #888; border-bottom: 1px solid #888; }
.pb svg { width: 10px; height: 10px; }
.pane-head .pb:last-child { margin-right: 1px; }

.scroller { display: flex; flex: 1; min-height: 0; gap: 3px; }
.list { flex: 1; min-width: 0; overflow: hidden; border-left: 1px solid #6d6d6d; border-top: 1px solid #6d6d6d; }
.white { background: #fff; }
.navy { background: #505a8a; color: #fff; }
.sky { background: #8aa3ff; color: #fff; }
.list table { width: 100%; table-layout: fixed; border-collapse: separate; border-spacing: 0; }
.list thead::after { content: ""; display: block; height: 1px; }
th { font-weight: normal; text-align: left; }
.list th {
  height: 17px;
  line-height: 15px;
  padding: 0 0 0 1px;
  background: #f0f0f0;
  color: #000;
  border-right: 1px solid #6d6d6d;
  border-bottom: 1px solid #6d6d6d;
  border-top: 1px solid #fff;
}
.sort::after { content: ""; display: block; width: 0; border: 4px solid transparent; border-top: 6px solid #444; border-bottom: 0; }
.list th.sort { padding: 0; }
td { height: 17px; padding: 0; white-space: nowrap; overflow: hidden; }
.selected td { background: #bfcbd9; color: #444; }
.c-arrow { width: 10px; }
.c-name { width: 137px; }
.c-instance { width: 133px; }
.c-value { width: 60px; }
.c-kind { width: 53px; }
.c-mode { width: 44px; }
.c-type { width: 104px; }
.c-state { width: 58px; }
.c-msgs { width: 48px; }

.node { display: flex; align-items: center; height: 17px; }
.node span { padding-left: 5px; }
.tog {
  flex: none;
  width: 10px;
  height: 10px;
  border: 1px solid #777;
  border-radius: 1px;
  background:
    linear-gradient(#000, #000) center / 6px 1px no-repeat,
    linear-gradient(#000, #000) center / 1px 6px no-repeat,
    linear-gradient(#fff, #d8dce8);
}
.tog.minus { background: linear-gradient(#000, #000) center / 6px 1px no-repeat, linear-gradient(#fff, #d8dce8); }
.link { flex: none; width: 6px; height: 1px; background: #888; }
.root { padding-left: 4px; }
.child { padding-left: 22px; background: linear-gradient(#888, #888) 26px 0 / 1px 17px no-repeat; }
.root span, .child span { padding-left: 6px; }
.leaf { padding-left: 18px; }
.obj { padding-left: 3px; }
.sig, .proc { padding-left: 19px; }
.obj span, .sig span { padding-left: 4px; }

.scrollbar { display: flex; flex-direction: column; width: 16px; flex: none; }
.scrollbar button { height: 16px; flex: none; }
.track { flex: 1; background: repeating-conic-gradient(#fff 0 25%, #e6e6e6 0 50%) 0 0 / 2px 2px; }
.thumb { flex: none; height: 98px; border: 1px solid; border-color: #fff #555 #555 #fff; background: #f0f0f0; }

/* Wave window */
.wave { border-right: 0; border-bottom: 0; padding-left: 2px; }
.active { background: #9ab3d3; height: 20px; border-bottom: 1px solid #f0f0f0; }
.active .rule { border-color: #000; box-shadow: inset 0 1px #cfe0f2, 0 1px #cfe0f2; }
.wave-body { display: flex; flex: 1; min-height: 0; border-left: 2px solid #777; border-top: 2px solid #777; }
.signals { flex: none; width: 302px; height: 100%; table-layout: fixed; border-collapse: separate; border-spacing: 0; color: #fff; background: #808080; }
.signals th { height: 20px; padding: 0 0 0 8px; border-bottom: 2px solid #fff; border-right: 2px solid #fff; }
.signals .wide { gap: 1px; }
.signals .msgs { padding: 0 5px 0 0; text-align: right; }
.signals td { border-right: 2px solid #fff; }
.signals td:first-child { border-left: 8px solid #fff; }
.signals td + td { padding-left: 1px; }
.signals .lead td { height: 2px; }
.signals .fill td { height: auto; }
.mark td { background: linear-gradient(#000, #000) 2px 1px / calc(100% - 6px) 1px no-repeat; }
.wsig { padding-left: 21px; }
.wbus { padding-left: 5px; }
.scope { flex: 1; display: flex; flex-direction: column; background: #000; border-left: 1px solid #ffe000; min-width: 0; }
.scope-top { height: 20px; flex: none; border-bottom: 2px solid #fff; background: linear-gradient(#ff0, #ff0) 0 1px / 2px 6px no-repeat; }
.scope-main { flex: 1; background: linear-gradient(#888, #888) 43px 0 / 1px 100% no-repeat; }
```
